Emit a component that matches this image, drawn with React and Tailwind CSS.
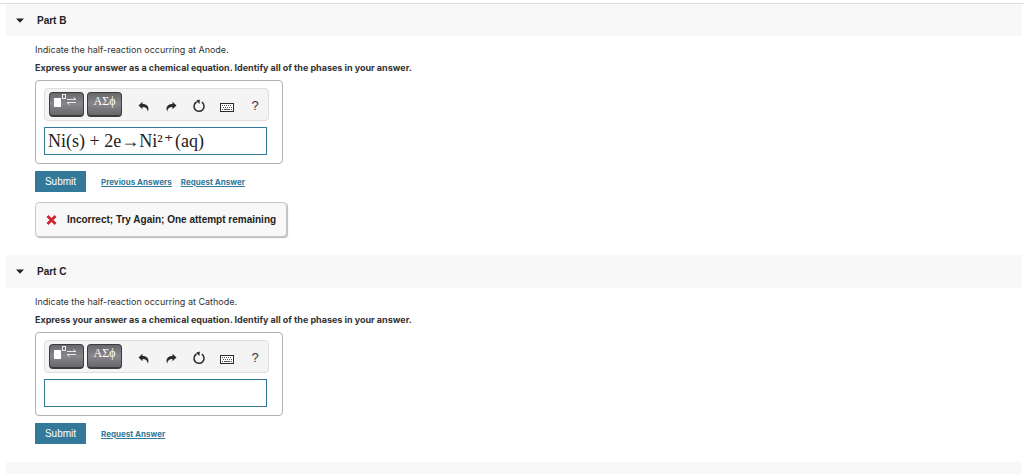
import React, { useState } from 'react';

function TemplateIcon() {
  return (
    <svg width="26" height="16" viewBox="0 0 26 16" aria-hidden="true">
      <rect x="0" y="5" width="7" height="9" fill="#fff" />
      <rect x="8.5" y="1.5" width="3" height="4" fill="none" stroke="#eee" />
      <path d="M13 6.500h9M19.500 4.500l2.500 2M13 9.500h9M13 9.500l2.500 2" stroke="#e8e8e8" fill="none" />
    </svg>
  );
}

function ArrowIcon({ flip }) {
  return (
    <svg width="11" height="11" viewBox="0 0 11 11" className={flip ? '-scale-x-100' : ''} aria-hidden="true">
      <path d="M0.500 4.500L4.500 0.800v2.200c3.600 0 6 2 6 4.900 0 1-.3 1.800-.8 2.500-.2-2.700-1.700-4.300-5.200-4.300v2.200z" fill="#2b2b2b" />
    </svg>
  );
}

function ResetIcon() {
  return (
    <svg width="14" height="14" viewBox="0 0 14 14" aria-hidden="true">
      <path d="M9.800 3.200a5 5 0 1 1-5.200-.2" fill="none" stroke="#2b2b2b" strokeWidth="1.500" />
      <path d="M4 1.800L7.800 0.500 7.500 5z" fill="#2b2b2b" />
    </svg>
  );
}

function KeyboardIcon() {
  return (
    <svg width="14" height="9" viewBox="0 0 14 9" aria-hidden="true">
      <rect x="0.5" y="0.5" width="13" height="8" fill="#fff" stroke="#2b2b2b" />
      <path d="M2 2.500h10M3 4.500h9" stroke="#555" strokeDasharray="1 1" />
      <path d="M2 6.500h1M4 6.500h6M11 6.500h1" stroke="#555" />
    </svg>
  );
}

const dark =
  'flex h-[25px] w-[35px] shrink-0 justify-center rounded-[4px] border border-b-2 border-[#3c3c3c] bg-linear-to-b from-[#68686d] via-[#88888c] to-[#68686c]';
const tool = 'flex h-6 w-7 items-center justify-center';

function Editor({ label, initial }) {
  const [value, setValue] = useState(initial);
  return (
    <div className="mt-[3px] w-[248px] rounded-[4px] border border-[#b0b0b0] px-2 pt-[7px] pb-2">
      <div role="toolbar" aria-label="Equation tools" className="flex h-[33px] w-[225px] items-center rounded-[4px] border border-[#dedede] bg-[#f4f4f4] pl-1">
        <button type="button" aria-label="Templates" className={dark}><TemplateIcon /></button>
        <button type="button" aria-label="Greek letters" className={`${dark} ml-[3px] font-['Liberation_Serif',serif] text-[12px] leading-4 text-white`}>
          ΑΣϕ
        </button>
        <div className="ml-[7px] flex shrink-0 pt-[3px]">
          <button type="button" aria-label="Undo" className={tool}><ArrowIcon /></button>
          <button type="button" aria-label="Redo" className={tool}><ArrowIcon flip /></button>
          <button type="button" aria-label="Reset" className={tool}><ResetIcon /></button>
          <button type="button" aria-label="Keyboard shortcuts" className={`${tool} pt-[2px]`}><KeyboardIcon /></button>
          <button type="button" aria-label="Help" className={`${tool} text-[13px]`}>?</button>
        </div>
      </div>
      <input
        aria-label={label}
        value={value}
        onChange={(e) => setValue(e.target.value)}
        className="mt-[6px] block h-7 w-[223px] border border-[#33799a] px-[3px] font-['Liberation_Serif','DejaVu_Serif',serif] text-[18px] text-[#222] outline-none"
      />
    </div>
  );
}

function Part({ name, electrode, initial, links, feedback, first }) {
  return (
    <section>
      <h2 className={`mr-[2px] ml-[6px] flex items-center bg-[#f8f8f8] text-[10px] font-bold text-[#222] ${first ? 'h-8' : 'h-[33px]'}`}>
        <button type="button" className="flex items-center gap-[13px] pl-[10px]">
          <svg width="8" height="5" viewBox="0 0 8 5" aria-hidden="true"><path d="M0 0.500h8L4 4.800z" fill="#222" /></svg>
          {name}
        </button>
      </h2>
      <div className="pt-[5px] pl-[35px]">
        <p className="font-['Inter','Liberation_Sans',sans-serif] text-[9px] leading-[18px]">Indicate the half-reaction occurring at {electrode}.</p>
        <p className="font-['Inter','Liberation_Sans',sans-serif] text-[9px] leading-[18px] font-bold">
          Express your answer as a chemical equation. Identify all of the phases in your answer.
        </p>
        <Editor label={`${name} answer`} initial={initial} />
        <div className="mt-[7px] flex h-[21px] items-center">
          <button type="button" className="h-full w-[51px] bg-[#33799a] text-[10px] text-white">Submit</button>
          <div className="ml-[15px] flex gap-[9px] font-['Inter','Liberation_Sans',sans-serif] text-[8px] leading-[12px] font-bold text-[#33799a] underline">
            {links.map((link) => <a key={link} href="#">{link}</a>)}
          </div>
        </div>
        {feedback && (
          <div role="status" className="mt-[10px] flex h-[35px] w-fit items-center gap-[10px] rounded-[4px] border border-[#c8c8c8] bg-[#f8f8f8] px-[10px] text-[10px] font-bold text-[#222] shadow-[1px_1px_1px_#bbb]">
            <svg width="11" height="10" viewBox="0 0 11 10" aria-hidden="true">
              <path d="M1.500 1l8 8M9.500 1l-8 8" stroke="#cf2430" strokeWidth="2.800" />
            </svg>
            {feedback}
          </div>
        )}
      </div>
    </section>
  );
}

export default function App() {
  return (
    <main className="bg-white pt-[3px] font-['Liberation_Sans',Arial,sans-serif] text-[#333]">
      <div className="border-t border-[#dedede]">
        <Part
          first
          name="Part B"
          electrode="Anode"
          initial={'Ni(s) + 2e→Ni²\u200a⁺\u200a(aq)'}
          links={['Previous Answers', 'Request Answer']}
          feedback="Incorrect; Try Again; One attempt remaining"
        />
        <div className="h-[18px]" />
        <Part name="Part C" electrode="Cathode" initial="" links={['Request Answer']} />
        <div className="mt-[18px] mr-[2px] ml-[6px] h-3 bg-[#f8f8f8]" />
      </div>
    </main>
  );
}
